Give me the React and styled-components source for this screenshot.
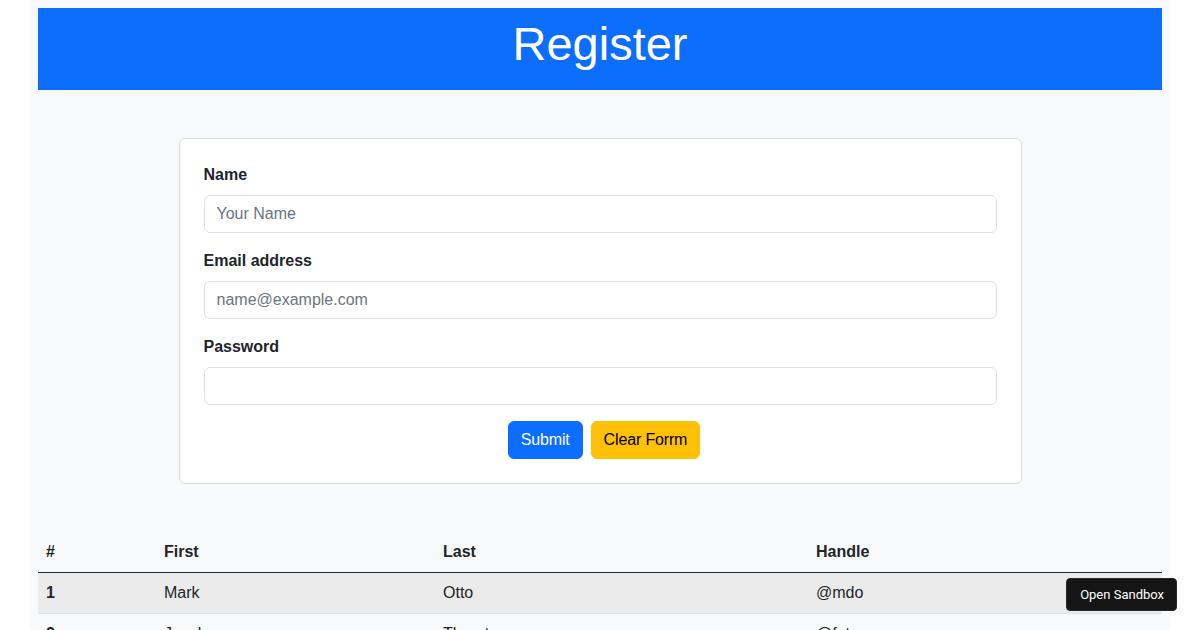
import React, { useState } from "react";
import styled, { createGlobalStyle } from "styled-components";

const GlobalStyle = createGlobalStyle`
  * { box-sizing: border-box; }
  body {
    margin: 0;
    background: #ffffff;
    color: #212529;
    font-family: "Liberation Sans", Arial, sans-serif;
    font-size: 16px;
    line-height: 1.5;
  }
`;

const Page = styled.div`
  width: 1140px;
  margin: 0 auto;
  padding: 8px 8px 0;
  background: #f8f9fa;
  min-height: 630px;
`;

const Header = styled.header`
  height: 82px;
  background: #0d6efd;
  color: #ffffff;
  display: flex;
  align-items: center;
  justify-content: center;
`;

const Title = styled.h1`
  margin: 0 0 9px;
  font-size: 47px;
  font-weight: 400;
  line-height: 1.2;
`;

const Card = styled.form`
  width: 843px;
  margin: 48px auto 0;
  padding: 24px;
  background: #ffffff;
  border: 1px solid #dcdcdd;
  border-radius: 6px;
`;

const Field = styled.div`
  margin-bottom: 16px;
`;

const Label = styled.label`
  display: block;
  margin-bottom: 8px;
  font-weight: 700;
`;

const Input = styled.input`
  display: block;
  width: 100%;
  height: 38px;
  padding: 6px 12px;
  font-family: inherit;
  font-size: 16px;
  color: #212529;
  background: #ffffff;
  border: 1px solid #dee2e6;
  border-radius: 6px;
  outline: none;

  &::placeholder {
    color: #6c757d;
  }
`;

const Actions = styled.div`
  display: flex;
  justify-content: center;
  gap: 8px;
  padding-left: 8px;
`;

const Button = styled.button`
  height: 38px;
  padding: 6px 12px;
  font-family: inherit;
  font-size: 16px;
  letter-spacing: -0.15px;
  border: 1px solid ${({ $variant }) => ($variant === "warning" ? "#ffc107" : "#0d6efd")};
  border-radius: 6px;
  background: ${({ $variant }) => ($variant === "warning" ? "#ffc107" : "#0d6efd")};
  color: ${({ $variant }) => ($variant === "warning" ? "#000000" : "#ffffff")};
  cursor: pointer;
`;

const Table = styled.table`
  width: 100%;
  margin-top: 48px;
  border-collapse: collapse;
  table-layout: fixed;
`;

const Th = styled.th`
  width: ${({ $w }) => $w};
  padding: 8px;
  text-align: left;
  font-weight: 700;
  border-bottom: 1px solid #212529;
`;

const Row = styled.tr`
  background: ${({ $striped }) => ($striped ? "#ebebec" : "transparent")};
`;

const Td = styled.td`
  padding: 8px;
  border-bottom: 1px solid #dee2e6;
  font-weight: ${({ $bold }) => ($bold ? 700 : 400)};
`;

const SandboxButton = styled.a`
  position: fixed;
  right: 23px;
  bottom: 19px;
  display: flex;
  align-items: center;
  height: 33px;
  padding: 0 12px 0 13px;
  background: #151515;
  color: #ffffff;
  border: 1px solid #2a2a2a;
  border-radius: 4px;
  font-family: Roboto, "Liberation Sans", sans-serif;
  font-size: 13px;
  text-decoration: none;
`;

const people = [
  { id: 1, first: "Mark", last: "Otto", handle: "@mdo" },
  { id: 2, first: "Jacob", last: "Thornton", handle: "@fat" },
  { id: 3, first: "Larry", last: "the Bird", handle: "@twitter" },
];

export default function App() {
  const [form, setForm] = useState({ name: "", email: "", password: "" });

  const update = (key) => (e) => setForm({ ...form, [key]: e.target.value });

  return (
    <>
      <GlobalStyle />
      <Page>
        <Header>
          <Title>Register</Title>
        </Header>

        <Card onSubmit={(e) => e.preventDefault()}>
          <Field>
            <Label htmlFor="name">Name</Label>
            <Input id="name" placeholder="Your Name" value={form.name} onChange={update("name")} />
          </Field>
          <Field>
            <Label htmlFor="email">Email address</Label>
            <Input
              id="email"
              type="email"
              placeholder="name@example.com"
              value={form.email}
              onChange={update("email")}
            />
          </Field>
          <Field>
            <Label htmlFor="password">Password</Label>
            <Input id="password" type="password" value={form.password} onChange={update("password")} />
          </Field>
          <Actions>
            <Button type="submit">Submit</Button>
            <Button
              type="button"
              $variant="warning"
              onClick={() => setForm({ name: "", email: "", password: "" })}
            >
              Clear Forrm
            </Button>
          </Actions>
        </Card>

        <Table>
          <thead>
            <tr>
              <Th $w="118px">#</Th>
              <Th $w="279px">First</Th>
              <Th $w="373px">Last</Th>
              <Th>Handle</Th>
            </tr>
          </thead>
          <tbody>
            {people.map((p, i) => (
              <Row key={p.id} $striped={i % 2 === 0}>
                <Td $bold>{p.id}</Td>
                <Td>{p.first}</Td>
                <Td>{p.last}</Td>
                <Td>{p.handle}</Td>
              </Row>
            ))}
          </tbody>
        </Table>
      </Page>
      <SandboxButton href="#">Open Sandbox</SandboxButton>
    </>
  );
}
